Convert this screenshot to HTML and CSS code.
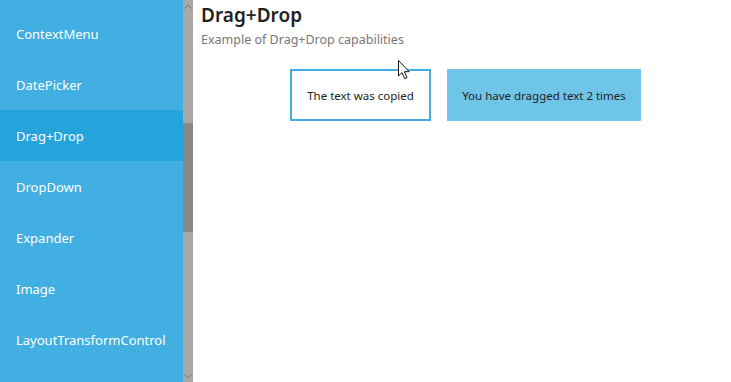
FILE: index.html
```html
<!DOCTYPE html>
<html lang="en">
  <head>
    <meta charset="utf-8" />
    <title>Drag+Drop</title>
    <link rel="stylesheet" href="styles.css">
  </head>
  <body>
    <div id="app">
      <div id="sidebar">
        <ul id="navList">
          <li class="navItem">ContextMenu</li>
          <li class="navItem">DatePicker</li>
          <li class="navItem selected">Drag+Drop</li>
          <li class="navItem">DropDown</li>
          <li class="navItem">Expander</li>
          <li class="navItem">Image</li>
          <li class="navItem">LayoutTransformControl</li>
        </ul>
        <div id="scrollBar">
          <div class="scrollArrow">
            <svg width="8" height="5" viewBox="0 0 8 5"><path d="M0.5 4.5 L4 1 L7.5 4.5" fill="none" stroke="#7a7a7a" stroke-width="1"/></svg>
          </div>
          <div class="scrollSpace top"></div>
          <div class="scrollThumb"></div>
          <div class="scrollSpace"></div>
          <div class="scrollArrow">
            <svg width="8" height="5" viewBox="0 0 8 5"><path d="M0.5 0.5 L4 4 L7.5 0.5" fill="none" stroke="#7a7a7a" stroke-width="1"/></svg>
          </div>
        </div>
      </div>

      <div id="content">
        <h1 id="title">Drag+Drop</h1>
        <div id="subtitle">Example of Drag+Drop capabilities</div>
        <div id="dropArea">
          <div class="dragBox source">The text was copied</div>
          <div class="dragBox target">You have dragged text 2 times</div>
        </div>
        <svg id="cursor" width="13" height="21" viewBox="0 0 13 21">
          <path d="M0.5 0.5 L0.5 16 L4 12.6 L6.6 18.6 L9 17.6 L6.4 11.7 L11.2 11.7 Z" fill="#fff" stroke="#111" stroke-width="1" stroke-linejoin="round"/>
        </svg>
      </div>
    </div>
  </body>
</html>
```

FILE: styles.css
```css
html,
body {
  margin: 0px;
  height: 100%;
  overflow: hidden;
  background-color: #ffffff;
  font-family: "Noto Sans", "Open Sans", sans-serif;
}

#app {
  display: flex;
  height: 100%;
}

#sidebar {
  display: flex;
  flex: 0 0 193px;
  background-color: #41afe1;
  overflow: hidden;
}

#navList {
  flex: 1;
  list-style: none;
  margin: 0px;
  padding: 8px 0px 0px 0px;
}

.navItem {
  box-sizing: border-box;
  height: 51px;
  line-height: 50px;
  padding-top: 1px;
  padding-left: 16px;
  font-size: 13px;
  color: #ffffff;
  white-space: nowrap;
}

.navItem.selected {
  background-color: #25a4dc;
}

#scrollBar {
  display: flex;
  flex-direction: column;
  width: 10px;
  background-color: #a8a8a8;
}

.scrollArrow {
  display: flex;
  justify-content: center;
  align-items: center;
  height: 12px;
}

.scrollSpace.top {
  flex: 0 0 111px;
}

.scrollSpace {
  flex: 1;
}

.scrollThumb {
  flex: 0 0 109px;
  background-color: #888888;
}

#content {
  position: relative;
  flex: 1;
  padding: 0px 1px 0px 8px;
}

#title {
  margin: 0px;
  padding-top: 2px;
  font-size: 19px;
  font-weight: 600;
  line-height: 26px;
  color: #222222;
}

#subtitle {
  margin-top: 3px;
  font-size: 12.5px;
  line-height: 17px;
  color: #777777;
}

#dropArea {
  display: flex;
  justify-content: center;
  gap: 16px;
  margin-top: 21px;
}

.dragBox {
  display: flex;
  align-items: center;
  justify-content: center;
  box-sizing: border-box;
  height: 52px;
  font-size: 11.5px;
  color: #222222;
}

.dragBox.source {
  width: 141px;
  border: 2px solid #41afe1;
}

.dragBox.target {
  width: 194px;
  background-color: #6fc5e8;
}

#cursor {
  position: absolute;
  left: 205px;
  top: 60px;
}
```
